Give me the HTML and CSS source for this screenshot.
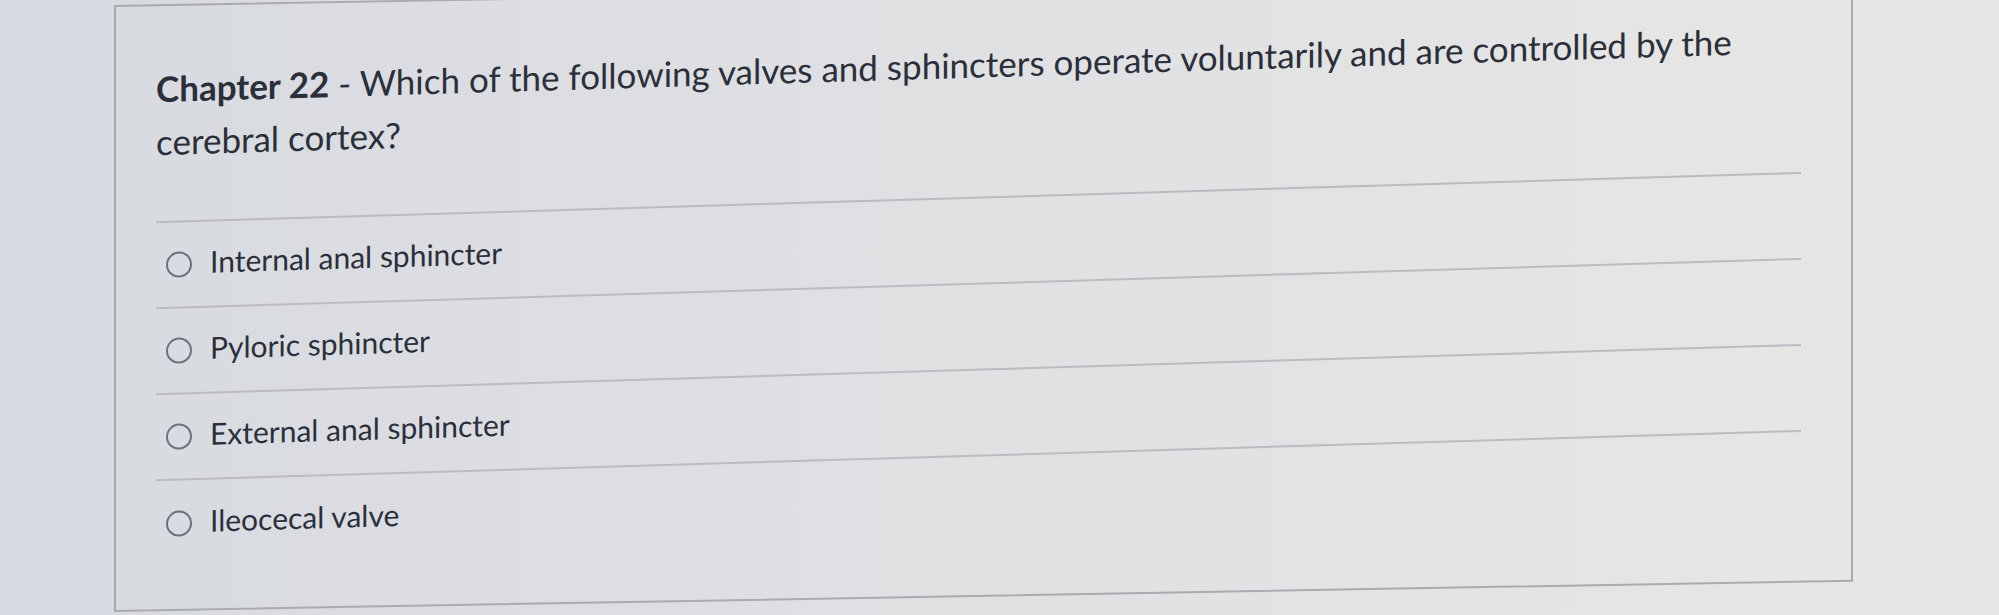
FILE: index.html
```html
<!DOCTYPE html>
<html lang="en">
<head>
<meta charset="utf-8">
<title>Quiz question</title>
<link rel="stylesheet" href="styles.css">
</head>
<body>
  <div class="card">
    <div class="content">
      <div class="question">
        <span class="qnum">Chapter 22</span> - Which of the following valves and sphincters operate voluntarily and are controlled by the cerebral cortex?
      </div>
      <ul class="answers">
        <li class="answer"><span class="radio"></span><span class="label">Internal anal sphincter</span></li>
        <li class="answer"><span class="radio"></span><span class="label">Pyloric sphincter</span></li>
        <li class="answer"><span class="radio"></span><span class="label">External anal sphincter</span></li>
        <li class="answer"><span class="radio"></span><span class="label">Ileocecal valve</span></li>
      </ul>
    </div>
  </div>
</body>
</html>
```
FILE: styles.css
```css
html, body {
  margin: 0;
  padding: 0;
}
body {
  width: 1999px;
  height: 615px;
  overflow: hidden;
  background: linear-gradient(90deg, #d7dae0 0%, #dcdee2 30%, #e1e2e3 60%, #e7e7e5 100%);
  font-family: Lato, "Open Sans", sans-serif;
  color: #2b2f3a;
}
.card {
  box-sizing: border-box;
  margin: 5px 0 0 114px;
  width: 1739px;
  height: 607px;
  border: 2px solid #a9abaf;
  padding: 56px 50px 0 40px;
  transform: skewY(-1deg);
  transform-origin: 0 0;
}
.content {
  transform: skewY(-0.72deg);
  transform-origin: 0 0;
}
.question {
  font-size: 35px;
  line-height: 53px;
  padding-bottom: 53px;
  border-bottom: 2px solid #b9bbbf;
}
.qnum {
  font-weight: 700;
}
.answers {
  list-style: none;
  margin: 0;
  padding: 0;
}
.answer {
  box-sizing: border-box;
  display: flex;
  align-items: center;
  height: 86px;
  border-bottom: 2px solid #babcc0;
  font-size: 30px;
}
.answer:last-child {
  border-bottom: none;
}
.radio {
  box-sizing: border-box;
  width: 26px;
  height: 26px;
  border: 2.5px solid #6e717c;
  border-radius: 50%;
  margin: 0 18px 0 10px;
  flex: none;
}
.label {
  line-height: 1;
  margin-top: -7px;
}
```
